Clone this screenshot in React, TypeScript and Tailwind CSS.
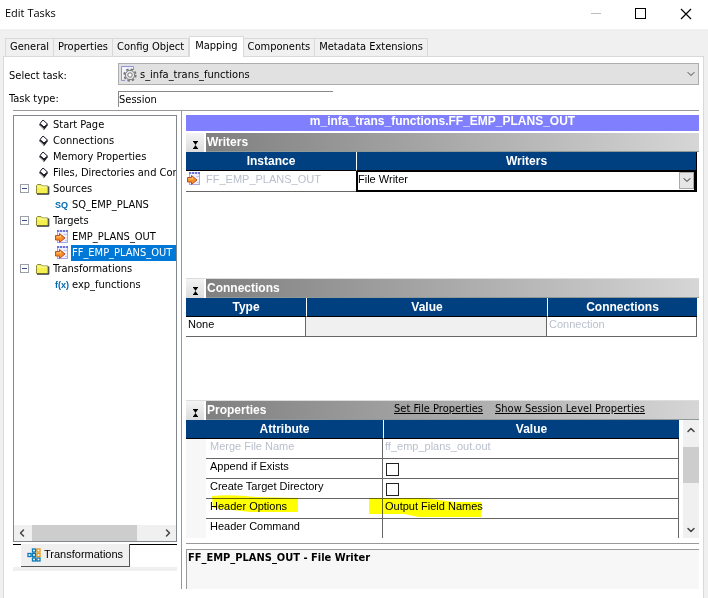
import { useState } from "react";
import type { ReactNode } from "react";
import { ChevronDown, ChevronLeft, ChevronRight, ChevronUp } from "lucide-react";

const tabs = ["General", "Properties", "Config Object", "Mapping", "Components", "Metadata Extensions"];

const pages = ["Start Page", "Connections", "Memory Properties", "Files, Directories and Commands"];

const folders = [
  { name: "Sources", icon: "sq", items: ["SQ_EMP_PLANS"] },
  { name: "Targets", icon: "target", items: ["EMP_PLANS_OUT", "FF_EMP_PLANS_OUT"] },
  { name: "Transformations", icon: "fx", items: ["exp_functions"] },
];

function PageIcon() {
  return (
    <svg className="h-3 w-3 shrink-0" viewBox="0 0 12 12" aria-hidden="true">
      <path d="M5 1 L10 6 L6 11 L1 6 Z" fill="#1c1c28" />
      <path d="M5 1 L9.500 5 L6 8 L2 4.500 Z" fill="#fff" stroke="#1c1c28" strokeWidth="1" />
      <path d="M2 6.500 L5.500 10" stroke="#fff" strokeWidth="1" />
    </svg>
  );
}

function FolderIcon() {
  return (
    <svg className="h-3 w-[14px] shrink-0" viewBox="0 0 14 12" aria-hidden="true">
      <path d="M.5 10.500 V2.500 L1.500 1.500 H5 L6.500 3 H12 V10.500 Z" fill="#f5f04e" stroke="#8c8a3a" />
      <path d="M1.500 4 H11" stroke="#ffffb8" />
      <path d="M1 11.200 H12.800 V3.500" fill="none" stroke="#222" />
    </svg>
  );
}

function TargetIcon() {
  return (
    <svg className="h-[13px] w-[13px] shrink-0" viewBox="0 0 13 13" aria-hidden="true">
      <rect x="2.500" y="1" width="10" height="11.500" fill="#eef0fd" stroke="#a4a9e6" />
      <path d="M2 1 H13" stroke="#6c74d8" strokeWidth="2" strokeDasharray="2 1" />
      <path d="M9 4.500 H12 M10 10.500 H12" stroke="#c3c8f0" />
      <path d="M.5 5.500 H4.500 V3.500 L10 8 L4.500 12.400 V10 H.5 Z" fill="#f7902a" stroke="#b8401a" strokeWidth="0.900" />
      <path d="M1.500 6.800 H5.500 V5.500" fill="none" stroke="#ffd277" />
    </svg>
  );
}

function ItemIcon({ kind }: { kind: string }) {
  if (kind === "target") return <TargetIcon />;
  return (
    <span className="w-[13px] shrink-0 font-['Liberation_Sans'] text-[9px] font-bold text-[#0068b0]" aria-hidden="true">
      {kind === "sq" ? "SQ" : "f(x)"}
    </span>
  );
}

function GearIcon() {
  return (
    <svg className="h-4 w-4" viewBox="0 0 16 16" fill="none" aria-hidden="true">
      <path d="M.5 14.500 V.5 H12.500 V4" stroke="#8b95d8" fill="#f2f3fc" />
      <path d="M.5 14.500 H4" stroke="#8b95d8" />
      <circle cx="9" cy="9" r="5.800" stroke="#777" strokeWidth="1.700" strokeDasharray="2.400 2.150" />
      <circle cx="9" cy="9" r="4.700" fill="#e4e4e6" stroke="#777" />
      <circle cx="9" cy="9" r="2.200" fill="#fff" stroke="#777" />
    </svg>
  );
}

function NetworkIcon() {
  return (
    <svg className="h-[14px] w-[14px]" viewBox="0 0 14 14" fill="#fff" strokeWidth="1.300" aria-hidden="true">
      <path d="M3 7 H11 M7 2 V12 M7 2 H11 M7 12 H11" stroke="#7aa6c4" />
      <g stroke="#0878b8">
        <rect x="1" y="5.500" width="3" height="3" />
        <rect x="5.500" y="1" width="3" height="3" />
        <rect x="5.500" y="5.500" width="3" height="3" />
        <rect x="5.500" y="10" width="3" height="3" />
        <rect x="10" y="10" width="3" height="3" />
      </g>
      <g stroke="#e39a16">
        <rect x="10" y="1" width="3" height="3" />
        <rect x="10" y="5.500" width="3" height="3" />
      </g>
    </svg>
  );
}

function SectionBar({ title, children }: { title: string; children?: ReactNode }) {
  return (
    <div className="flex h-[19px] gap-[2px]">
      <button className="flex w-[18px] items-end justify-center bg-gradient-to-b from-[#f4f4f4] to-[#dcdcdc] pb-[3px]" aria-label={`Collapse ${title}`}>
        <svg className="h-2 w-[7px]" viewBox="0 0 7 8" aria-hidden="true">
          <path d="M1 .5 H6 M1 7.500 H6" stroke="#000" />
          <path d="M1.500 1 H5.500 L3.500 4 Z M1.500 7 H5.500 L3.500 4 Z" fill="#000" />
        </svg>
      </button>
      <div className="flex flex-1 items-center border-b border-[#8e9a9a] bg-gradient-to-r from-[#808080] to-[#d6d6d6] px-px font-['Liberation_Sans'] text-[11px]">
        <h2 className="text-[12px] font-bold text-white">{title}</h2>
        {children}
      </div>
    </div>
  );
}

const th = "h-[19px] border-b border-black bg-[#004080] p-0 text-center text-[12px] leading-[18px] font-bold text-white";
const thNext = "h-[19px] border-b border-l border-b-black border-l-white bg-[#004080] p-0 text-center text-[12px] leading-[18px] font-bold text-white";
const cell = "h-5 border-r border-b border-[#666] px-[2px] py-0 align-top leading-[15px]";
const faded = "text-[#b9bfcc]";

function Tree() {
  const [selected, setSelected] = useState("FF_EMP_PLANS_OUT");
  const [closed, setClosed] = useState<string[]>([]);
  const toggle = (name: string) =>
    setClosed(closed.includes(name) ? closed.filter((c) => c !== name) : [...closed, name]);

  return (
    <ul className="flex-1 overflow-hidden pt-px leading-4 whitespace-nowrap">
      {pages.map((page) => (
        <li key={page} className="flex h-4 items-center gap-[3px] pl-6">
          <PageIcon />
          <button onClick={() => setSelected(page)}>{page}</button>
        </li>
      ))}
      {folders.map((f) => (
        <li key={f.name}>
          <div className="flex h-4 items-center gap-[3px] pl-[6px]">
            <button
              className="mr-1 flex h-[9px] w-[9px] items-center justify-center border border-[#9aa0aa] bg-white"
              aria-label={`Toggle ${f.name}`}
              onClick={() => toggle(f.name)}
            >
              <span className="h-px w-[5px] bg-[#3a4a8c]" />
            </button>
            <FolderIcon />
            <span>{f.name}</span>
          </div>
          {!closed.includes(f.name) && (
            <ul>
              {f.items.map((item) => (
                <li key={item} className="flex h-4 items-center gap-[3px] pl-[41px]">
                  <ItemIcon kind={f.icon} />
                  <button
                    className={item === selected ? "h-4 flex-1 bg-[#0078d7] px-px text-left text-white" : "h-4 px-px"}
                    onClick={() => setSelected(item)}
                  >
                    {item}
                  </button>
                </li>
              ))}
            </ul>
          )}
        </li>
      ))}
    </ul>
  );
}

function Writers() {
  return (
    <section className="min-h-[145px]">
      <SectionBar title="Writers" />
      <table className="w-[calc(100%-2px)] table-fixed border-separate border-spacing-0 border-r border-black">
        <thead>
          <tr>
            <th className={`${th} w-1/3`}>Instance</th>
            <th className={thNext}>Writers</th>
          </tr>
        </thead>
        <tbody>
          <tr>
            <td className="h-[21px] border-b border-[#666] py-px pr-0 pl-px align-top">
              <div className={`flex gap-[6px] leading-[15px] ${faded}`}>
                <TargetIcon />
                FF_EMP_PLANS_OUT
              </div>
            </td>
            <td className="h-[21px] p-0">
              <div className="relative">
                <select aria-label="Writer" className="block h-[21px] w-full appearance-none border-2 border-t border-black bg-white pb-1 leading-[15px]">
                  <option>File Writer</option>
                </select>
                <span className="pointer-events-none absolute top-px right-[2px] flex h-[17px] w-[15px] items-center justify-center border border-[#aaa] bg-[#e6e6e6]">
                  <ChevronDown className="h-3 w-3 shrink-0 text-[#222]" />
                </span>
              </div>
            </td>
          </tr>
        </tbody>
      </table>
    </section>
  );
}

function Connections() {
  return (
    <section className="min-h-[122px] border-t border-[#ddd]">
      <SectionBar title="Connections" />
      <table className="w-[calc(100%-2px)] table-fixed border-separate border-spacing-0">
        <thead>
          <tr>
            <th className={`${th} w-[120px]`}>Type</th>
            <th className={thNext}>Value</th>
            <th className={`${thNext} w-[150px]`}>Connections</th>
          </tr>
        </thead>
        <tbody>
          <tr>
            <td className={cell}>None</td>
            <td className={`${cell} bg-[#f0f0f0]`} />
            <td className={`${cell} ${faded}`}>Connection</td>
          </tr>
        </tbody>
      </table>
    </section>
  );
}

function Properties() {
  const margin = <td className="h-5 bg-[#f7f7f7] p-0" />;
  return (
    <section className="border-t border-[#ddd]">
      <SectionBar title="Properties">
        <nav className="ml-auto flex gap-3 pr-[53px] font-['DejaVu_Sans_Condensed','DejaVu_Sans',sans-serif] text-black underline">
          <a href="#file">Set File Properties</a>
          <a href="#session">Show Session Level Properties</a>
        </nav>
      </SectionBar>
      <div className="flex h-[118px] gap-1">
        <div className="flex-1 overflow-hidden">
          <table className="w-full table-fixed border-separate border-spacing-0">
            <thead>
              <tr>
                <th className={`${th} w-5`} aria-label="Row" />
                <th className={`${th} w-[177px] pr-5`}>Attribute</th>
                <th className={thNext}>Value</th>
              </tr>
            </thead>
            <tbody>
              <tr>
                {margin}
                <td className={`${cell} ${faded} pl-1`}>Merge File Name</td>
                <td className={`${cell} ${faded}`}>ff_emp_plans_out.out</td>
              </tr>
              {["Append if Exists", "Create Target Directory"].map((label) => (
                <tr key={label}>
                  {margin}
                  <td className={`${cell} pl-1`}>
                    <label htmlFor={label}>{label}</label>
                  </td>
                  <td className={`${cell} pt-1`}>
                    <input
                      id={label}
                      type="checkbox"
                      className="ml-px block h-[13px] w-[13px] appearance-none border border-[#222] bg-white checked:bg-[#0078d7]"
                    />
                  </td>
                </tr>
              ))}
              <tr>
                {margin}
                <td className={`${cell} relative pl-1`}>
                  <svg className="absolute -top-1 left-[5px] h-[18px] w-[88px] mix-blend-multiply" viewBox="0 0 88 18" aria-hidden="true">
                    <path d="M1 1 Q20 -1 45 2 L87 3 V17 L40 17 L2 13 Z" fill="#ffff00" />
                  </svg>
                  <span className="relative">Header Options</span>
                </td>
                <td className={`${cell} relative`}>
                  <svg className="absolute -top-[2px] -left-[14px] h-[22px] w-[113px] mix-blend-multiply" viewBox="0 0 113 22" aria-hidden="true">
                    <path d="M0 1 L55 1 L85 5 L112 5 V20 L50 20 L35 17 L0 17 Z" fill="#ffff00" />
                  </svg>
                  <span className="relative">Output Field Names</span>
                </td>
              </tr>
              <tr>
                {margin}
                <td className={`${cell} pl-1`}>Header Command</td>
                <td className={cell} />
              </tr>
            </tbody>
          </table>
        </div>
        <div className="flex w-4 flex-col items-center bg-[#f0f0f0]">
          <button className="flex h-[27px] items-start pt-1" aria-label="Scroll up">
            <ChevronUp className="h-3 w-3 text-[#444]" strokeWidth={3} />
          </button>
          <div className="h-9 w-full bg-[#cdcdcd]" />
          <button className="mt-auto pb-[2px]" aria-label="Scroll down">
            <ChevronDown className="h-3 w-3 text-[#444]" strokeWidth={3} />
          </button>
        </div>
      </div>
    </section>
  );
}

export default function App() {
  const [active, setActive] = useState("Mapping");

  return (
    <div className="flex min-h-screen flex-col bg-[#f0f0f0] font-['DejaVu_Sans_Condensed','DejaVu_Sans',sans-serif] text-[11px] text-black">
      <header className="flex h-[29px] items-center bg-white pr-4 pb-[2px] pl-[5px]">
        <h1 className="flex-1 font-['Open_Sans',sans-serif] text-[11px]">Edit Tasks</h1>
        <div className="flex items-center gap-[34px]">
          <button aria-label="Minimize" className="h-px w-[10px] bg-[#bbb]" />
          <button aria-label="Maximize" className="h-[11px] w-[11px] border border-black" />
          <button aria-label="Close">
            <svg className="h-3 w-3" viewBox="0 0 12 12" aria-hidden="true">
              <path d="M1 1 L11 11 M11 1 L1 11" stroke="#000" strokeWidth="1.200" />
            </svg>
          </button>
        </div>
      </header>

      <div role="tablist" className="flex h-[27px] items-end pl-[5px] whitespace-nowrap">
        {tabs.map((tab) => (
          <button
            key={tab}
            role="tab"
            aria-selected={tab === active}
            onClick={() => setActive(tab)}
            className={
              tab === active
                ? "relative -mb-px h-[21px] border border-b-0 border-[#d9d9d9] bg-white px-[5px] pb-[2px]"
                : "h-[18px] border-t border-r border-[#d9d9d9] px-1 first:border-l"
            }
          >
            {tab}
          </button>
        ))}
      </div>

      <main className="mr-1 ml-[3px] flex flex-1 flex-col border border-b-0 border-[#d9d9d9] bg-white pr-1 pl-[5px]">
        <div className="flex items-center pt-[6px]">
          <label htmlFor="task" className="w-[109px] pt-1">Select task:</label>
          <div className="relative flex-1">
            <select id="task" className="block h-[22px] w-full appearance-none border border-[#adadad] bg-[#e1e1e1] pt-[2px] pl-[21px]">
              <option>s_infa_trans_functions</option>
            </select>
            <span className="pointer-events-none absolute top-[3px] left-[3px]">
              <GearIcon />
            </span>
            <ChevronDown className="pointer-events-none absolute top-[5px] right-[2px] h-3 w-3 text-[#444]" />
          </div>
        </div>
        <div className="flex items-center pt-[6px]">
          <label htmlFor="type" className="w-[109px]">Task type:</label>
          <input id="type" readOnly value="Session" className="h-4 w-[215px] border-t border-l border-[#888] bg-white" />
        </div>

        <div className="mt-[2px] ml-1 flex border-t border-[#999]">
          <aside className="mr-1 w-[164px] shrink-0 pt-1">
            <div className="flex h-[427px] flex-col border border-[#828790] bg-white">
              <Tree />
              <div className="flex h-4 items-center bg-[#f0f0f0] px-[2px]">
                <button className="w-4" aria-label="Scroll left">
                  <ChevronLeft className="h-3 w-3 text-[#444]" strokeWidth={3} />
                </button>
                <div className="h-full w-[105px] bg-[#cdcdcd]" />
                <button className="ml-auto" aria-label="Scroll right">
                  <ChevronRight className="h-3 w-3 text-[#444]" strokeWidth={3} />
                </button>
              </div>
            </div>
            <div className="mt-[2px] border-b-4 border-[#f0f0f0] pl-2 shadow-[inset_0_1px_0_#000]">
              <button className="flex h-[23px] items-center gap-[3px] border-r border-b border-[#555] bg-[#f0f0f0] px-[6px] font-['Liberation_Sans']">
                <NetworkIcon />
                Transformations
              </button>
            </div>
          </aside>

          <div className="min-w-0 flex-1 border-l border-[#999] pt-1 pl-1 font-['Liberation_Sans']">
            <h2 className="mb-[2px] h-4 bg-[#8080ff] text-center text-[12px] leading-[13px] font-bold text-white">
              m_infa_trans_functions.FF_EMP_PLANS_OUT
            </h2>
            <Writers />
            <Connections />
            <Properties />
            <div className="mt-[5px] border-t border-[#999] pt-[5px]">
              <p className="h-10 border-t border-l border-[#999] bg-[#f7f7f7] px-px font-['DejaVu_Sans_Condensed','DejaVu_Sans',sans-serif] font-bold">
                FF_EMP_PLANS_OUT - File Writer
              </p>
            </div>
          </div>
        </div>
      </main>
    </div>
  );
}
